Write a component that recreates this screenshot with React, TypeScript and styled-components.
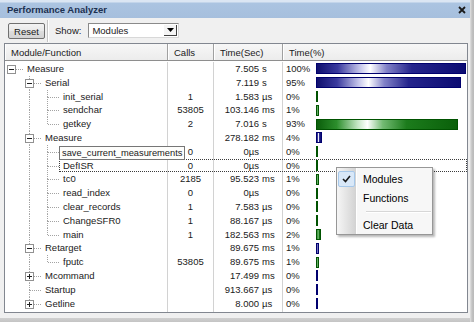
import React from "react";
import styled, { createGlobalStyle } from "styled-components";

const GlobalStyle = createGlobalStyle`
  html, body {
    margin: 0;
    padding: 0;
    background: #f0f0f0;
  }
  body {
    font-family: "Liberation Sans", Arial, sans-serif;
    color: #1a1a1a;
  }
`;

const ROW_H = 13.8;

type Row = {
  level: number;
  name: string;
  calls?: string;
  num: string;
  unit?: string;
  pct: string;
  bar: number;
  tone: "blue" | "green";
  expand?: "minus" | "plus";
  focused?: boolean;
  tip?: boolean;
};

const rows: Row[] = [
  { level: 0, name: "Measure", num: "7.505", unit: "s", pct: "100%", bar: 151, tone: "blue", expand: "minus" },
  { level: 1, name: "Serial", num: "7.119", unit: "s", pct: "95%", bar: 145, tone: "blue", expand: "minus" },
  { level: 2, name: "init_serial", calls: "1", num: "1.583", unit: "µs", pct: "0%", bar: 2, tone: "green" },
  { level: 2, name: "sendchar", calls: "53805", num: "103.146", unit: "ms", pct: "1%", bar: 3, tone: "green" },
  { level: 2, name: "getkey", calls: "2", num: "7.016", unit: "s", pct: "93%", bar: 142, tone: "green" },
  { level: 1, name: "Measure", num: "278.182", unit: "ms", pct: "4%", bar: 6, tone: "blue", expand: "minus" },
  { level: 2, name: "save_current_measurements", calls: "0", num: "0µs", pct: "0%", bar: 2, tone: "green", tip: true },
  { level: 2, name: "DefISR", calls: "0", num: "0µs", pct: "0%", bar: 2, tone: "green", focused: true },
  { level: 2, name: "tc0", calls: "2185", num: "95.523", unit: "ms", pct: "1%", bar: 3, tone: "green" },
  { level: 2, name: "read_index", calls: "0", num: "0µs", pct: "0%", bar: 2, tone: "green" },
  { level: 2, name: "clear_records", calls: "1", num: "7.583", unit: "µs", pct: "0%", bar: 2, tone: "green" },
  { level: 2, name: "ChangeSFR0", calls: "1", num: "88.167", unit: "µs", pct: "0%", bar: 2, tone: "green" },
  { level: 2, name: "main", calls: "1", num: "182.563", unit: "ms", pct: "2%", bar: 5, tone: "green" },
  { level: 1, name: "Retarget", num: "89.675", unit: "ms", pct: "1%", bar: 3, tone: "blue", expand: "minus" },
  { level: 2, name: "fputc", calls: "53805", num: "89.675", unit: "ms", pct: "1%", bar: 3, tone: "green" },
  { level: 1, name: "Mcommand", num: "17.499", unit: "ms", pct: "0%", bar: 2, tone: "blue", expand: "plus" },
  { level: 1, name: "Startup", num: "913.667", unit: "µs", pct: "0%", bar: 2, tone: "blue" },
  { level: 1, name: "Getline", num: "8.000", unit: "µs", pct: "0%", bar: 2, tone: "blue", expand: "plus" },
];

const hasNextSibling = (i: number, level: number) => {
  for (let j = i + 1; j < rows.length; j++) {
    if (rows[j].level < level) return false;
    if (rows[j].level === level) return true;
  }
  return false;
};

const ancestorAt = (i: number, level: number) => {
  for (let j = i; j >= 0; j--) {
    if (rows[j].level === level) return j;
  }
  return i;
};

const Window = styled.div`
  position: relative;
  width: 474px;
  height: 322px;
  display: flex;
  overflow: hidden;
`;

const Main = styled.div`
  width: 470px;
  display: flex;
  flex-direction: column;
`;

const RightEdge = styled.div`
  width: 4px;
  background: linear-gradient(to right, #e2e2e2, #c2c2c2 2px, #b9b9b9);
`;

const TitleBar = styled.div`
  height: 18px;
  display: flex;
  align-items: center;
  justify-content: space-between;
  padding: 1px 4px 0 7px;
  box-sizing: border-box;
  background: linear-gradient(#dbe6f3 0, #dbe6f3 2px, #abc4e1 3px, #a6bfdd 100%);
  color: #1c3050;
  font-size: 9.5px;
  font-weight: bold;
`;

const Toolbar = styled.div`
  height: 25px;
  display: flex;
  align-items: center;
  padding-left: 8px;
  font-size: 9.5px;
`;

const ResetButton = styled.div`
  width: 37px;
  height: 16px;
  box-sizing: border-box;
  border: 1px solid #707070;
  border-radius: 2px;
  background: linear-gradient(#f3f3f3, #e8e8e8 50%, #dddddd 51%, #d3d3d3);
  display: flex;
  align-items: center;
  justify-content: center;
  margin-top: 1px;
`;

const ToolSep = styled.div`
  width: 1px;
  height: 22px;
  margin: 0 0 0 2px;
  background: #c5c5c5;
  border-right: 1px solid #ffffff;
`;

const ShowLabel = styled.span`
  margin-left: 6px;
`;

const Combo = styled.div`
  margin-left: 7px;
  width: 91px;
  height: 15px;
  box-sizing: border-box;
  border: 1px solid #8a8a8a;
  border-right-color: #d8d8d8;
  border-bottom-color: #d8d8d8;
  background: #ffffff;
  display: flex;
  align-items: center;
  justify-content: space-between;
  padding-left: 3px;
`;

const ComboArrow = styled.div`
  width: 13px;
  height: 11px;
  margin-right: 1px;
  box-sizing: border-box;
  border-bottom: 1px solid #404040;
  border-right: 1px solid #404040;
  background: #f4f4f4;
  display: flex;
  align-items: center;
  justify-content: center;
`;

const Table = styled.div`
  margin-left: 4px;
  width: 464px;
  height: 270px;
  box-sizing: border-box;
  border: 1px solid #828790;
  display: flex;
  flex-direction: column;
  font-size: 9.5px;
`;

const HeaderRow = styled.div`
  display: grid;
  grid-template-columns: 163px 46px 69px 1fr;
  height: 17px;
  box-sizing: border-box;
  border-bottom: 1px solid #8e8e8e;
  background: linear-gradient(#f7f7f7, #ececec);
`;

const HeaderCell = styled.div<{ $last?: boolean }>`
  display: flex;
  align-items: center;
  padding-left: 5px;
  border-right: 1px solid ${(p) => (p.$last ? "transparent" : "#a0a0a0")};
  border-left: 1px solid #ffffff;
`;

const Body = styled.div`
  flex: 1;
  display: flex;
  flex-direction: column;
  background: #ffffff;
  padding-top: 1px;
  overflow: hidden;
`;

const TreeRow = styled.div`
  position: relative;
  display: grid;
  grid-template-columns: 163px 46px 69px 1fr;
  grid-template-rows: ${ROW_H}px;
  height: ${ROW_H}px;
  line-height: ${ROW_H}px;
  flex-shrink: 0;
`;

const FillerRow = styled.div`
  display: grid;
  grid-template-columns: 163px 46px 69px 1fr;
  flex: 1;
`;

const Cell = styled.div<{ $divider?: boolean }>`
  border-right: 1px solid ${(p) => (p.$divider ? "#d2d2d2" : "transparent")};
  min-width: 0;
`;

const NameCell = styled(Cell)`
  position: relative;
  display: flex;
`;

const Label = styled.span`
  flex: 1;
  min-width: 0;
  padding-left: 4px;
  white-space: nowrap;
  overflow: hidden;
`;

const CallsCell = styled(Cell)`
  text-align: center;
`;

const TimeCell = styled(Cell)`
  display: flex;
`;

const Num = styled.span`
  width: 45px;
  text-align: right;
  white-space: nowrap;
`;

const Unit = styled.span`
  margin-left: 3px;
`;

const PctCell = styled(Cell)`
  display: flex;
  align-items: center;
  padding-left: 3px;
`;

const PctText = styled.span`
  width: 30px;
`;

const Bar = styled.div<{ $tone: "blue" | "green" }>`
  height: 11px;
  box-sizing: border-box;
  border: 1px solid ${(p) => (p.$tone === "blue" ? "#00006e" : "#005200")};
  background: ${(p) =>
    p.$tone === "blue"
      ? "linear-gradient(to right, #10106e 0%, #3a3a9e 14%, #c4c4ea 29%, #ffffff 36%, #8282c8 47%, #24248c 64%, #0c0c72 100%)"
      : "linear-gradient(to right, #0b5e0b 0%, #2c8e2c 14%, #c4e6c4 29%, #ffffff 36%, #72ba72 47%, #1c7c1c 64%, #0a600a 100%)"};
`;

const Tooltip = styled.div`
  position: absolute;
  left: 54px;
  top: 1px;
  z-index: 2;
  height: 14px;
  box-sizing: border-box;
  border: 1px solid #767676;
  background: #fdfdfb;
  padding: 0 2px;
  line-height: 12px;
  font-size: 9.3px;
  white-space: nowrap;
`;

const FocusRing = styled.div`
  position: absolute;
  left: 54px;
  right: 0;
  top: 0;
  bottom: 0;
  border: 1px dotted #3c3c3c;
  pointer-events: none;
`;

const BottomStrip = styled.div`
  flex: 1;
  background: linear-gradient(#f0f0f0 0, #f0f0f0 5px, #d0d0d0 5px, #c4c4c4 100%);
`;

const Menu = styled.div`
  position: absolute;
  left: 336px;
  top: 167px;
  width: 97px;
  box-sizing: border-box;
  border: 1px solid #979797;
  padding-top: 1px;
  background: linear-gradient(to right, #f6f6f6 0, #d2d2d2 19px, #ffffff 19px, #ffffff 20px, #f7f7f7 20px);
  box-shadow: 2px 2px 2px rgba(0, 0, 0, 0.28);
  font-size: 10.5px;
  color: #000000;
  z-index: 3;
`;

const MenuItem = styled.div`
  height: 19px;
  display: flex;
  align-items: center;
`;

const CheckBox = styled.div<{ $on?: boolean }>`
  width: 17px;
  height: 16px;
  margin-left: 1px;
  box-sizing: border-box;
  border: 1px solid ${(p) => (p.$on ? "#a6c8ea" : "transparent")};
  border-radius: 2px;
  background: ${(p) => (p.$on ? "#d9e8f8" : "transparent")};
  display: flex;
  align-items: center;
  justify-content: center;
`;

const MenuLabel = styled.span`
  margin-left: 8px;
`;

const MenuSep = styled.div`
  height: 1px;
  margin: 4px 1px 2px 29px;
  background: #d7d7d7;
  border-bottom: 1px solid #ffffff;
`;

const LINE = "#a3a3a3";

const TreeSlot = ({ i, k }: { i: number; k: number }) => {
  const row = rows[i];
  const own = k === row.level;
  let up = false;
  let down = false;
  if (own) {
    up = row.level > 0;
    down = hasNextSibling(i, row.level);
  } else {
    const a = ancestorAt(i, k);
    up = down = hasNextSibling(a, k);
  }
  return (
    <svg width={18} height={ROW_H} style={{ display: "block", flexShrink: 0 }}>
      {up && <line x1={6.5} y1={0} x2={6.5} y2={7} stroke={LINE} strokeDasharray="1 1" />}
      {down && <line x1={6.5} y1={7} x2={6.5} y2={ROW_H} stroke={LINE} strokeDasharray="1 1" />}
      {own && <line x1={7} y1={7.5} x2={18} y2={7.5} stroke={LINE} strokeDasharray="1 1" />}
      {own && row.expand && (
        <g>
          <rect x={2.5} y={3.5} width={8} height={8} fill="#ffffff" stroke="#919191" />
          <line x1={4} y1={7.5} x2={9} y2={7.5} stroke="#202020" />
          {row.expand === "plus" && <line x1={6.5} y1={5} x2={6.5} y2={10} stroke="#202020" />}
        </g>
      )}
    </svg>
  );
};

const App = () => {
  return (
    <Window>
      <GlobalStyle />
      <Main>
        <TitleBar>
          <span>Performance Analyzer</span>
          <svg width={8} height={8}>
            <path d="M1 1 L7 7 M7 1 L1 7" stroke="#1a1a1a" strokeWidth={1.8} />
          </svg>
        </TitleBar>
        <Toolbar>
          <ResetButton>Reset</ResetButton>
          <ToolSep />
          <ShowLabel>Show:</ShowLabel>
          <Combo>
            <span>Modules</span>
            <ComboArrow>
              <svg width={7} height={4}>
                <path d="M0 0 H7 L3.5 4 Z" fill="#000000" />
              </svg>
            </ComboArrow>
          </Combo>
        </Toolbar>
        <Table>
          <HeaderRow>
            <HeaderCell>Module/Function</HeaderCell>
            <HeaderCell>Calls</HeaderCell>
            <HeaderCell>Time(Sec)</HeaderCell>
            <HeaderCell $last>Time(%)</HeaderCell>
          </HeaderRow>
          <Body>
            {rows.map((row, i) => (
              <TreeRow key={i}>
                <NameCell $divider>
                  {Array.from({ length: row.level + 1 }, (_, k) => (
                    <TreeSlot key={k} i={i} k={k} />
                  ))}
                  {row.tip ? <Tooltip>{row.name}</Tooltip> : <Label>{row.name}</Label>}
                </NameCell>
                <CallsCell $divider>{row.calls}</CallsCell>
                <TimeCell $divider>
                  <Num>{row.num}</Num>
                  {row.unit && <Unit>{row.unit}</Unit>}
                </TimeCell>
                <PctCell>
                  <PctText>{row.pct}</PctText>
                  <Bar $tone={row.tone} style={{ width: row.bar }} />
                </PctCell>
                {row.focused && <FocusRing />}
              </TreeRow>
            ))}
            <FillerRow>
              <Cell $divider />
              <Cell $divider />
              <Cell $divider />
              <Cell />
            </FillerRow>
          </Body>
        </Table>
        <BottomStrip />
      </Main>
      <RightEdge />
      <Menu>
        <MenuItem>
          <CheckBox $on>
            <svg width={9} height={8}>
              <path d="M1 4 L3.5 6.5 L8 1" stroke="#1a1a1a" strokeWidth={1.6} fill="none" />
            </svg>
          </CheckBox>
          <MenuLabel>Modules</MenuLabel>
        </MenuItem>
        <MenuItem>
          <CheckBox />
          <MenuLabel>Functions</MenuLabel>
        </MenuItem>
        <MenuSep />
        <MenuItem>
          <CheckBox />
          <MenuLabel>Clear Data</MenuLabel>
        </MenuItem>
      </Menu>
    </Window>
  );
};

export default App;
